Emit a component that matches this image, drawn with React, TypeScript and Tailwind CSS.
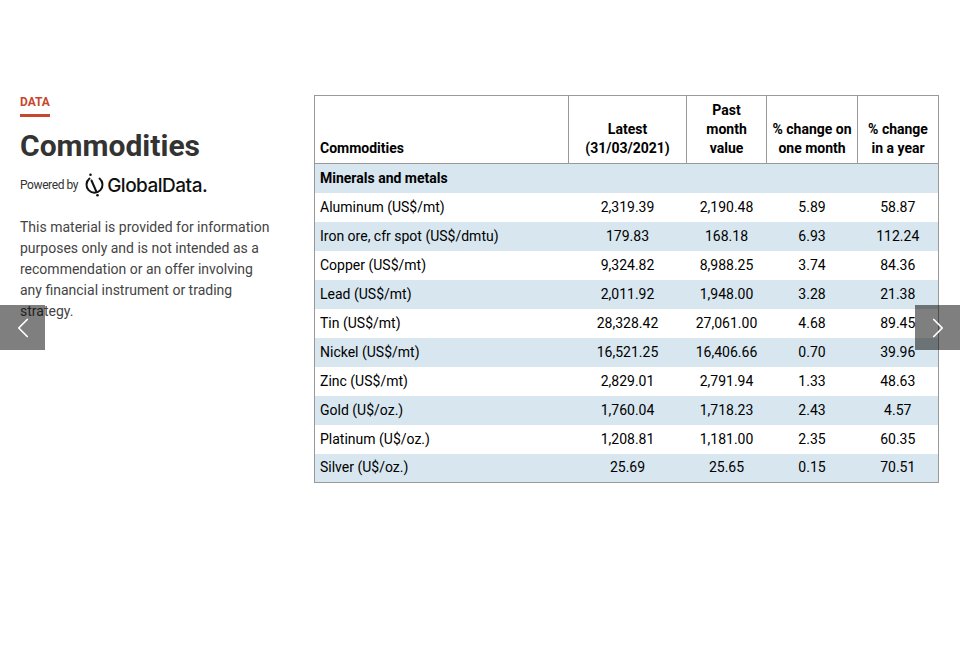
import { ChevronLeft, ChevronRight } from 'lucide-react';

const rows: [string, string, string, string, string][] = [
  ['Aluminum (US$/mt)', '2,319.39', '2,190.48', '5.89', '58.87'],
  ['Iron ore, cfr spot (US$/dmtu)', '179.83', '168.18', '6.93', '112.24'],
  ['Copper (US$/mt)', '9,324.82', '8,988.25', '3.74', '84.36'],
  ['Lead (US$/mt)', '2,011.92', '1,948.00', '3.28', '21.38'],
  ['Tin (US$/mt)', '28,328.42', '27,061.00', '4.68', '89.45'],
  ['Nickel (US$/mt)', '16,521.25', '16,406.66', '0.70', '39.96'],
  ['Zinc (US$/mt)', '2,829.01', '2,791.94', '1.33', '48.63'],
  ['Gold (U$/oz.)', '1,760.04', '1,718.23', '2.43', '4.57'],
  ['Platinum (U$/oz.)', '1,208.81', '1,181.00', '2.35', '60.35'],
  ['Silver (U$/oz.)', '25.69', '25.65', '0.15', '70.51'],
];

function Logo() {
  return (
    <div className="flex items-center gap-[3px]">
      <svg width="19" height="24" viewBox="0 0 19 24" fill="none" stroke="#111" strokeWidth="2">
        <path d="M4.5 5.5 A8 8 0 1 0 14.5 5.5" strokeLinecap="round" />
        <line x1="6.5" y1="7.5" x2="11.5" y2="19" strokeLinecap="round" />
        <circle cx="5.5" cy="1.8" r="1.3" fill="#111" stroke="none" />
        <circle cx="12.5" cy="22.3" r="1.3" fill="#111" stroke="none" />
      </svg>
      <span className="text-[19px] font-medium tracking-[-0.5px] text-[#111] leading-none" style={{ fontFamily: 'Inter, sans-serif' }}>
        GlobalData.
      </span>
    </div>
  );
}

export default function App() {
  return (
    <div className="relative w-[960px] h-[655px] bg-white overflow-hidden" style={{ fontFamily: 'Roboto, "Liberation Sans", sans-serif' }}>
      <div className="flex gap-[44px] pl-5 pt-[95px]">
        {/* Left column */}
        <div className="w-[250px] shrink-0">
          <div className="w-fit">
            <div className="text-[12px] font-bold text-[#c8472f] leading-[15px]">DATA</div>
            <div className="h-[3px] w-[30px] bg-[#c8472f] mt-[4px]" />
          </div>
          <h1 className="text-[30px] font-bold text-[#333] leading-[36px] mt-[11px]">Commodities</h1>
          <div className="flex items-center gap-[7px] mt-[9px]">
            <span className="text-[12px] text-[#333] tracking-[-0.4px]">Powered by</span>
            <Logo />
          </div>
          <p className="mt-[20px] text-[14px] leading-[21px] text-[#444]">
            This material is provided for information purposes only and is not intended as a recommendation or an offer involving any financial instrument or trading strategy.
          </p>
        </div>

        {/* Table */}
        <table className="w-[625px] border-collapse border border-[#999] text-[14px] text-black">
          <thead>
            <tr className="h-[68px] font-bold leading-[19px]">
              <th className="w-[254px] border border-[#999] text-left align-bottom px-[5px] pb-[5px] font-bold">Commodities</th>
              <th className="w-[118px] border border-[#999] text-center align-bottom px-[5px] pb-[5px] font-bold">Latest<br />(31/03/2021)</th>
              <th className="w-[80px] border border-[#999] text-center align-bottom px-[5px] pb-[5px] font-bold">Past<br />month<br />value</th>
              <th className="w-[91px] border border-[#999] text-center align-bottom px-0 pb-[5px] font-bold">% change on<br />one month</th>
              <th className="w-[81px] border border-[#999] text-center align-bottom px-0 pb-[5px] font-bold">% change<br />in a year</th>
            </tr>
          </thead>
          <tbody>
            <tr className="h-[29px] bg-[#d7e6ef]">
              <td colSpan={5} className="px-[5px] font-bold">Minerals and metals</td>
            </tr>
            {rows.map((r, i) => (
              <tr key={r[0]} className={i % 2 === 1 ? 'h-[29px] bg-[#d7e6ef]' : 'h-[29px] bg-white'}>
                <td className="px-[5px] text-left">{r[0]}</td>
                <td className="text-center">{r[1]}</td>
                <td className="text-center">{r[2]}</td>
                <td className="text-center">{r[3]}</td>
                <td className="text-center">{r[4]}</td>
              </tr>
            ))}
          </tbody>
        </table>
      </div>

      {/* Carousel arrows */}
      <button className="absolute left-0 top-[305px] w-[45px] h-[45px] bg-black/50 flex items-center justify-center">
        <ChevronLeft className="w-[34px] h-[34px] text-white" strokeWidth={1.2} />
      </button>
      <button className="absolute right-0 top-[305px] w-[45px] h-[45px] bg-black/50 flex items-center justify-center">
        <ChevronRight className="w-[34px] h-[34px] text-white" strokeWidth={1.2} />
      </button>
    </div>
  );
}
